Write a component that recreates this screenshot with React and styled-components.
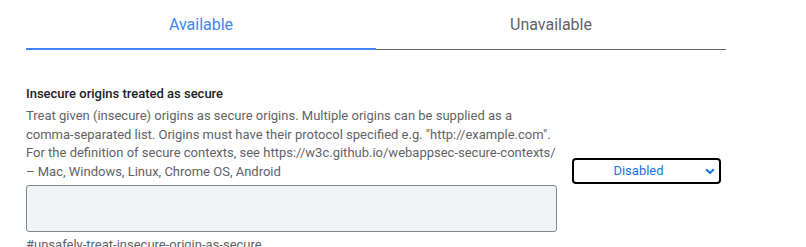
import React from "react";
import styled, { createGlobalStyle } from "styled-components";

const GlobalStyle = createGlobalStyle`
  body {
    margin: 0;
    background: #fff;
    font-family: Roboto, "Liberation Sans", Arial, sans-serif;
  }
`;

const Page = styled.div`
  width: 700px;
  margin-left: 26px;
`;

const Tabs = styled.div`
  display: flex;
`;

const Tab = styled.div`
  box-sizing: border-box;
  width: 350px;
  height: 50px;
  padding-top: 15px;
  text-align: center;
  font-size: 16px;
  line-height: 20px;
  color: ${(p) => (p.active ? "#4285f4" : "#5f6368")};
  border-bottom: ${(p) => (p.active ? "2px solid #4285f4" : "1px solid #5f6368")};
`;

const Experiment = styled.div`
  display: flex;
  align-items: center;
  margin-top: 35px;
`;

const TextColumn = styled.div`
  width: 531px;
  font-size: 13px;
  line-height: 18.4px;
`;

const Title = styled.div`
  color: #202124;
  font-weight: 500;
  margin-bottom: 4px;
`;

const Description = styled.div`
  color: #5f6368;
`;

const Origins = styled.textarea`
  display: block;
  box-sizing: border-box;
  width: 531px;
  height: 47px;
  margin-top: 4px;
  background: #f1f3f4;
  border: 1px solid #80868b;
  border-radius: 3px;
  resize: none;
  font: inherit;
`;

const Permalink = styled.div`
  margin-top: 4px;
  color: #5f6368;
`;

const SelectWrap = styled.div`
  position: relative;
  margin-left: 15px;
  margin-top: 2px;
`;

const Select = styled.select`
  appearance: none;
  box-sizing: border-box;
  width: 149px;
  height: 26px;
  padding: 0 22px 0 6px;
  border: 2px solid #000;
  border-radius: 4px;
  background: #fff;
  color: #1a73e8;
  font-family: Roboto, "Liberation Sans", Arial, sans-serif;
  font-size: 13px;
  text-align: center;
  text-align-last: center;
`;

const Chevron = styled.svg`
  position: absolute;
  right: 6px;
  top: 10px;
  pointer-events: none;
`;

export default function App() {
  return (
    <>
      <GlobalStyle />
      <Page>
        <Tabs>
          <Tab active>Available</Tab>
          <Tab>Unavailable</Tab>
        </Tabs>
        <Experiment>
          <TextColumn>
            <Title>Insecure origins treated as secure</Title>
            <Description>
              Treat given (insecure) origins as secure origins. Multiple origins can be supplied as a
              comma-separated list. Origins must have their protocol specified e.g. "http://example.com".
              For the definition of secure contexts, see https://w3c.github.io/webappsec-secure-contexts/
              {" "}– Mac, Windows, Linux, Chrome OS, Android
            </Description>
            <Origins />
            <Permalink>#unsafely-treat-insecure-origin-as-secure</Permalink>
          </TextColumn>
          <SelectWrap>
            <Select defaultValue="disabled">
              <option value="default">Default</option>
              <option value="enabled">Enabled</option>
              <option value="disabled">Disabled</option>
            </Select>
            <Chevron width="10" height="7" viewBox="0 0 10 7">
              <path d="M1.2 1.2 L5 5 L8.8 1.2" fill="none" stroke="#1a73e8" strokeWidth="2" />
            </Chevron>
          </SelectWrap>
        </Experiment>
      </Page>
    </>
  );
}
